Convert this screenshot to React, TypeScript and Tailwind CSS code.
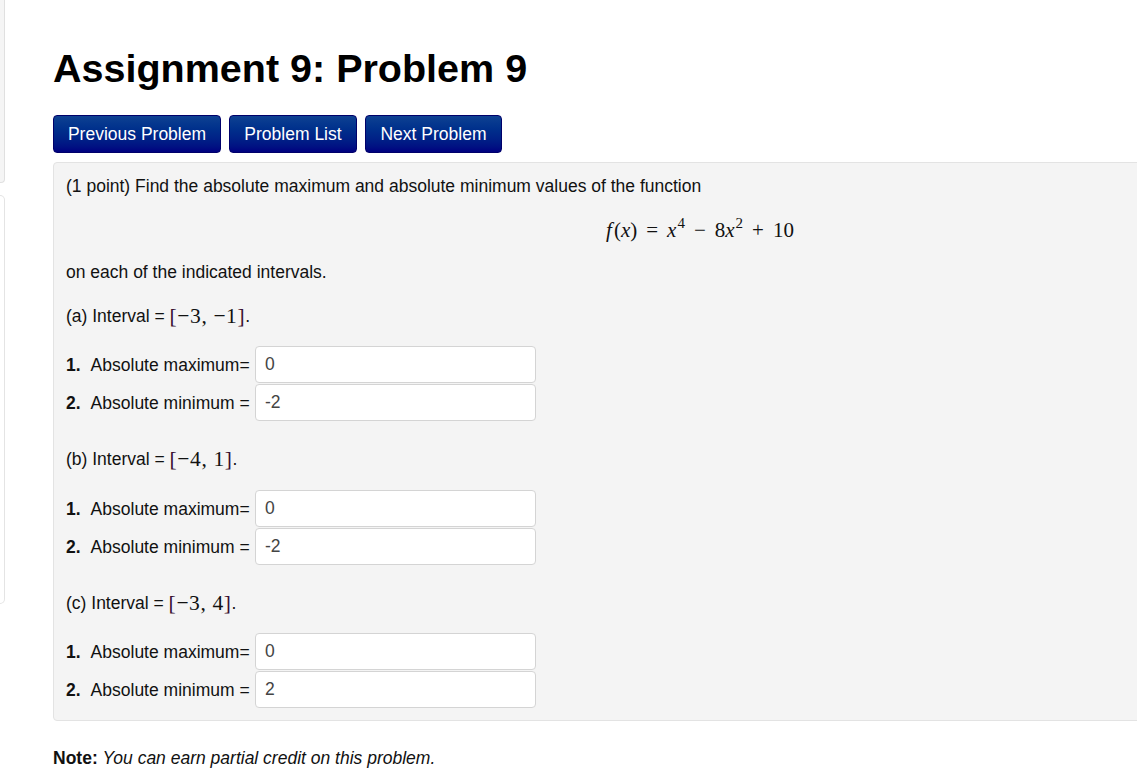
import React from 'react'

const sans = "font-['Liberation_Sans',Arial,sans-serif]"
const serif = "font-['Liberation_Serif','Times_New_Roman',serif]"

function NavButton({ label, width }: { label: string; width: string }) {
  return (
    <button
      className={`h-[38px] ${width} rounded-[4px] border border-[#00006a] bg-linear-to-b from-[#0f4192] to-[#000080] text-[17.5px] text-white`}
    >
      {label}
    </button>
  )
}

function Interval({ part, a, b }: { part: string; a: string; b: string }) {
  return (
    <div className="flex h-5 items-center">
      <span>({part}) Interval =&nbsp;</span>
      <span className={`${serif} text-[21.5px] leading-5 tracking-[0.6px]`}>
        <span className="text-[#3a1030]">[</span>
        {a},&nbsp;{b}
        <span className="text-[#3a1030]">]</span>
      </span>
      <span>.</span>
    </div>
  )
}

function AnswerRow({ n, label, value }: { n: number; label: string; value: string }) {
  return (
    <div className="flex items-center">
      <div className="w-[189px] whitespace-nowrap">
        <span className="font-bold">{n}.</span>
        <span className="ml-[10px]">{label}</span>
      </div>
      <input
        readOnly
        value={value}
        className="h-[37px] w-[281px] rounded-[4px] border border-[#d4d4d4] bg-white px-[9px] text-[17.5px] text-[#444] outline-none"
      />
    </div>
  )
}

function AnswerPair({ max, min }: { max: string; min: string }) {
  return (
    <div className="flex flex-col gap-[1px]">
      <AnswerRow n={1} label="Absolute maximum=" value={max} />
      <AnswerRow n={2} label="Absolute minimum =" value={min} />
    </div>
  )
}

export default function App() {
  return (
    <div className={`flex h-[784px] w-[1137px] overflow-hidden bg-white ${sans} text-[17.5px] text-[#111]`}>
      {/* sidebar edge */}
      <div className="flex w-[5px] shrink-0 flex-col">
        <div className="h-[183px] rounded-br-[4px] border-r border-b border-[#e0e0e0] bg-[#f5f5f5]" />
        <div className="mt-[12px] h-[409px] rounded-r-[6px] border border-l-0 border-[#e4e4e4] bg-white" />
      </div>

      <div className="flex shrink-0 flex-col pl-[48px]">
        <h1 className="mt-[45px] text-[39.5px] leading-[46px] font-bold text-black">Assignment 9: Problem 9</h1>

        <div className="mt-[24px] flex gap-[8px]">
          <NavButton label="Previous Problem" width="w-[168px]" />
          <NavButton label="Problem List" width="w-[128px]" />
          <NavButton label="Next Problem" width="w-[137px]" />
        </div>

        <div className="mt-[9px] w-[1294px] rounded-[4px] border border-[#e3e3e3] bg-[#f4f4f4] px-[12px] pt-[13px] pb-[12px] leading-5">
          <p>(1 point) Find the absolute maximum and absolute minimum values of the function</p>

          <div className={`mt-[22px] flex h-[24px] items-center justify-center ${serif} text-[21px]`}>
            <span className="italic">f</span>
            <span className="ml-[2px]">(</span>
            <span className="italic">x</span>
            <span>)</span>
            <span className="mx-[9px]">=</span>
            <span className="italic">x</span>
            <sup className="ml-[1px] text-[15px]">4</sup>
            <span className="mx-[9px]">−</span>
            <span>8</span>
            <span className="italic">x</span>
            <sup className="ml-[1px] text-[15px]">2</sup>
            <span className="mx-[9px]">+</span>
            <span>10</span>
          </div>

          <p className="mt-[20px]">on each of the indicated intervals.</p>

          <div className="mt-[24px]">
            <Interval part="a" a="−3" b="−1" />
          </div>
          <div className="mt-[20px]">
            <AnswerPair max="0" min="-2" />
          </div>

          <div className="mt-[28px]">
            <Interval part="b" a="−4" b="1" />
          </div>
          <div className="mt-[21px]">
            <AnswerPair max="0" min="-2" />
          </div>

          <div className="mt-[28px]">
            <Interval part="c" a="−3" b="4" />
          </div>
          <div className="mt-[20px]">
            <AnswerPair max="0" min="2" />
          </div>
        </div>

        <p className="mt-[27px] leading-5">
          <span className="font-bold">Note:</span> <span className="italic">You can earn partial credit on this problem.</span>
        </p>
      </div>
    </div>
  )
}
